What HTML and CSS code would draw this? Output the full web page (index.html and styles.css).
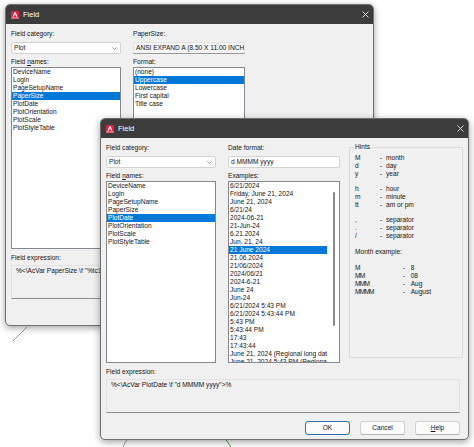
FILE: index.html
```html
<!doctype html>
<html lang="en">
  <head>
    <meta charset="utf-8">
    <title>Field</title>
    <link rel="stylesheet" href="styles.css">
  </head>
  <body>
    <!-- bits of the drawing behind the dialogs -->
    <svg class="backdrop" width="474" height="447" viewBox="0 0 474 447">
      <path d="M13 341 L27 327" stroke="#9c9c9c" fill="none"/>
      <path d="M130 437 Q125 441 123 447" stroke="#a0a0a0" fill="none"/>
      <path d="M224 437 L231 447" stroke="#44a544" fill="none"/>
    </svg>

    <!-- back dialog -->
    <div class="dialog dialog-back">
      <div class="titlebar">
        <svg class="app-icon" width="8" height="8" viewBox="0 0 8 8">
          <rect width="8" height="8" rx="1" fill="#d8233f"/>
          <rect y="6" width="8" height="2" fill="#e8627a"/>
          <path d="M1.6 5.8 L3.4 1.2 L4.6 1.2 L6.4 5.8 L5.2 5.8 L4 2.7 L2.8 5.8Z" fill="#fff"/>
        </svg>
        <span class="title">Field</span>
        <svg class="close" width="7" height="7" viewBox="0 0 7 7">
          <path d="M0.5 0.5 L6.5 6.5 M6.5 0.5 L0.5 6.5" stroke="#e6e6e6" stroke-width="0.9"/>
        </svg>
      </div>
      <div class="dialog-body">
        <div class="fields">
          <div class="col">
            <div class="label">Field category:</div>
            <div class="combo">
              <span>Plot</span>
              <svg class="chevron" width="5" height="3" viewBox="0 0 5 3"><path d="M0.3 0.3 L2.5 2.6 L4.7 0.3" stroke="#777" stroke-width="0.7" fill="none"/></svg>
            </div>
            <div class="label after-control">Field <u>n</u>ames:</div>
            <div class="list">
              <ul>
                <li>DeviceName</li>
                <li>Login</li>
                <li>PageSetupName</li>
                <li class="selected">PaperSize</li>
                <li>PlotDate</li>
                <li>PlotOrientation</li>
                <li>PlotScale</li>
                <li>PlotStyleTable</li>
              </ul>
            </div>
          </div>
          <div class="col">
            <div class="label">PaperSize:</div>
            <div class="textbox readonly">ANSI EXPAND A (8.50 X 11.00 INCHES)</div>
            <div class="label after-control">Format:</div>
            <div class="list">
              <ul>
                <li>(none)</li>
                <li class="selected">Uppercase</li>
                <li>Lowercase</li>
                <li>First capital</li>
                <li>Title case</li>
              </ul>
            </div>
          </div>
        </div>
        <div class="label expr-label">Field expression:</div>
        <div class="expr">%&lt;\AcVar PaperSize \f "%tc1"&gt;%</div>
        <div class="buttons">
          <button class="btn default">OK</button>
          <button class="btn">Cancel</button>
          <button class="btn"><u>H</u>elp</button>
        </div>
      </div>
    </div>

    <!-- front dialog -->
    <div class="dialog dialog-front">
      <div class="titlebar">
        <svg class="app-icon" width="8" height="8" viewBox="0 0 8 8">
          <rect width="8" height="8" rx="1" fill="#d8233f"/>
          <rect y="6" width="8" height="2" fill="#e8627a"/>
          <path d="M1.6 5.8 L3.4 1.2 L4.6 1.2 L6.4 5.8 L5.2 5.8 L4 2.7 L2.8 5.8Z" fill="#fff"/>
        </svg>
        <span class="title">Field</span>
        <svg class="close" width="7" height="7" viewBox="0 0 7 7">
          <path d="M0.5 0.5 L6.5 6.5 M6.5 0.5 L0.5 6.5" stroke="#e6e6e6" stroke-width="0.9"/>
        </svg>
      </div>
      <div class="dialog-body">
        <div class="fields">
          <div class="col">
            <div class="label">Field category:</div>
            <div class="combo">
              <span>Plot</span>
              <svg class="chevron" width="5" height="3" viewBox="0 0 5 3"><path d="M0.3 0.3 L2.5 2.6 L4.7 0.3" stroke="#777" stroke-width="0.7" fill="none"/></svg>
            </div>
            <div class="label after-control">Field <u>n</u>ames:</div>
            <div class="list">
              <ul>
                <li>DeviceName</li>
                <li>Login</li>
                <li>PageSetupName</li>
                <li>PaperSize</li>
                <li class="selected">PlotDate</li>
                <li>PlotOrientation</li>
                <li>PlotScale</li>
                <li>PlotStyleTable</li>
              </ul>
            </div>
          </div>
          <div class="col">
            <div class="label">Date format:</div>
            <div class="textbox">d MMMM yyyy</div>
            <div class="label after-control">Examples:</div>
            <div class="list scroll">
              <ul>
                <li>6/21/2024</li>
                <li>Friday, June 21, 2024</li>
                <li>June 21, 2024</li>
                <li>6/21/24</li>
                <li>2024-06-21</li>
                <li>21-Jun-24</li>
                <li>6.21.2024</li>
                <li>Jun. 21, 24</li>
                <li class="selected">21 June 2024</li>
                <li>21.06.2024</li>
                <li>21/06/2024</li>
                <li>2024/06/21</li>
                <li>2024-6-21</li>
                <li>June 24</li>
                <li>Jun-24</li>
                <li>6/21/2024 5:43 PM</li>
                <li>6/21/2024 5:43:44 PM</li>
                <li>5:43 PM</li>
                <li>5:43:44 PM</li>
                <li>17:43</li>
                <li>17:43:44</li>
                <li>June 21, 2024 (Regional long date)</li>
                <li>June 21, 2024 5:43 PM (Regional long date)</li>
              </ul>
              <div class="scrollbar"><div class="thumb"></div></div>
            </div>
          </div>
          <fieldset class="hints">
            <legend>Hints</legend>
            <div class="hint-group">
              <span>M</span><span>-</span><span>month</span>
              <span>d</span><span>-</span><span>day</span>
              <span>y</span><span>-</span><span>year</span>
            </div>
            <div class="hint-group">
              <span>h</span><span>-</span><span>hour</span>
              <span>m</span><span>-</span><span>minute</span>
              <span>tt</span><span>-</span><span>am or pm</span>
            </div>
            <div class="hint-group">
              <span>,</span><span>-</span><span>separator</span>
              <span>.</span><span>-</span><span>separator</span>
              <span>/</span><span>-</span><span>separator</span>
            </div>
            <div class="hint-title">Month example:</div>
            <div class="hint-group month">
              <span class="key">M</span><span>-</span><span>8</span>
              <span class="key">MM</span><span>-</span><span>08</span>
              <span class="key">MMM</span><span>-</span><span>Aug</span>
              <span class="key">MMMM</span><span>-</span><span>August</span>
            </div>
          </fieldset>
        </div>
        <div class="label expr-label">Field expression:</div>
        <div class="expr">%&lt;\AcVar PlotDate \f "d MMMM yyyy"&gt;%</div>
        <div class="buttons">
          <button class="btn default">OK</button>
          <button class="btn">Cancel</button>
          <button class="btn"><u>H</u>elp</button>
        </div>
      </div>
    </div>
  </body>
</html>
```

FILE: styles.css
```css
* {
  box-sizing: border-box;
}

html, body {
  margin: 0;
  padding: 0;
}

body {
  position: relative;
  width: 474px;
  height: 447px;
  overflow: hidden;
  background: #fff;
  font-family: "Liberation Sans", Arial, sans-serif;
  font-size: 6.6px;
  line-height: 8px;
  color: #141414;
}

.backdrop {
  position: absolute;
  left: 0;
  top: 0;
}

/* windows sit on the desktop at their own spots */
.dialog {
  position: absolute;
  width: 369px;
  height: 322px;
  display: flex;
  flex-direction: column;
  background: #f0f0f0;
  border: 1px solid #6f6f6f;
  border-radius: 5px;
  box-shadow: 0 2px 7px rgba(0, 0, 0, 0.38);
  overflow: hidden;
}

.dialog-back {
  left: 5px;
  top: 4px;
}

.dialog-front {
  left: 100px;
  top: 118px;
}

.titlebar {
  height: 19px;
  flex: none;
  display: flex;
  align-items: center;
  padding-left: 5px;
  background: #3c3c3c;
  color: #fff;
  font-size: 7.5px;
}

.app-icon {
  flex: none;
  margin-right: 4px;
}

.close {
  margin-left: auto;
  margin-right: 4px;
}

.dialog-body {
  flex: 1;
  display: flex;
  flex-direction: column;
  padding: 6px 8px 4px 5px;
}

.fields {
  display: grid;
  grid-template-columns: 110px 112px 111px;
  column-gap: 12px;
  height: 219px;
}

.col {
  display: flex;
  flex-direction: column;
}

.label {
  height: 8px;
  white-space: nowrap;
}

.label.after-control {
  margin-top: 4px;
}

.combo,
.textbox {
  height: 12px;
  margin-top: 4px;
  display: flex;
  align-items: center;
  padding: 0 3px 0 2px;
  background: #fff;
  border: 1px solid #d2d2d2;
  border-radius: 2px;
  white-space: nowrap;
  overflow: hidden;
}

.combo span {
  flex: 1;
}

.textbox.readonly {
  background: #f4f4f4;
  border-color: #e2e2e2;
  border-bottom-color: #9a9a9a;
  border-radius: 0;
}

.list {
  margin-top: 1px;
  height: 182px;
  background: #fff;
  border: 1px solid #828790;
  overflow: hidden;
}

.list ul {
  list-style: none;
  margin: 0;
  padding: 0;
}

.list li {
  height: 8px;
  padding-left: 1px;
  white-space: nowrap;
  overflow: hidden;
}

.list li.selected {
  background: #0078d7;
  color: #fff;
}

.list.scroll {
  display: flex;
}

.list.scroll ul {
  flex: 1;
  min-width: 0;
}

.scrollbar {
  width: 12px;
  flex: none;
}

.thumb {
  width: 2px;
  height: 134px;
  margin: 10px 0 0 6px;
  background: #8a8a8a;
  border-radius: 1px;
}

.hints {
  align-self: start;
  height: 215px;
  min-width: 0;
  margin: -1px 0 0 -3px;
  padding: 3px 4px 0 5px;
  border: 1px solid #d9d9d9;
}

.hints legend {
  padding: 0 1px;
  margin-left: -1px;
  line-height: 8px;
}

.hint-group {
  display: grid;
  grid-template-columns: 25px 6px auto;
}

.hint-group + .hint-group {
  margin-top: 7px;
}

.hint-title {
  margin-top: 8px;
}

.hint-group.month {
  grid-template-columns: auto 6px auto;
  column-gap: 2px;
  margin-top: 8px;
}

.hint-group.month .key {
  letter-spacing: -0.8px;
}

.expr-label {
  margin-top: 5px;
}

.expr {
  height: 34px;
  margin-top: 3px;
  padding: 1px 4px;
  border: 1px solid #e2e2e2;
  border-bottom-color: #8e8e8e;
  white-space: nowrap;
  overflow: hidden;
}

.buttons {
  display: flex;
  justify-content: flex-end;
  gap: 10px;
  margin-top: 8px;
}

.btn {
  width: 45px;
  height: 14px;
  padding: 0;
  font: inherit;
  color: #141414;
  background: #fbfbfb;
  border: 1px solid #d0d0d0;
  border-bottom-color: #b4b4b4;
  border-radius: 3px;
}

.btn.default {
  border: 1px solid #2f6fb8;
}
```
